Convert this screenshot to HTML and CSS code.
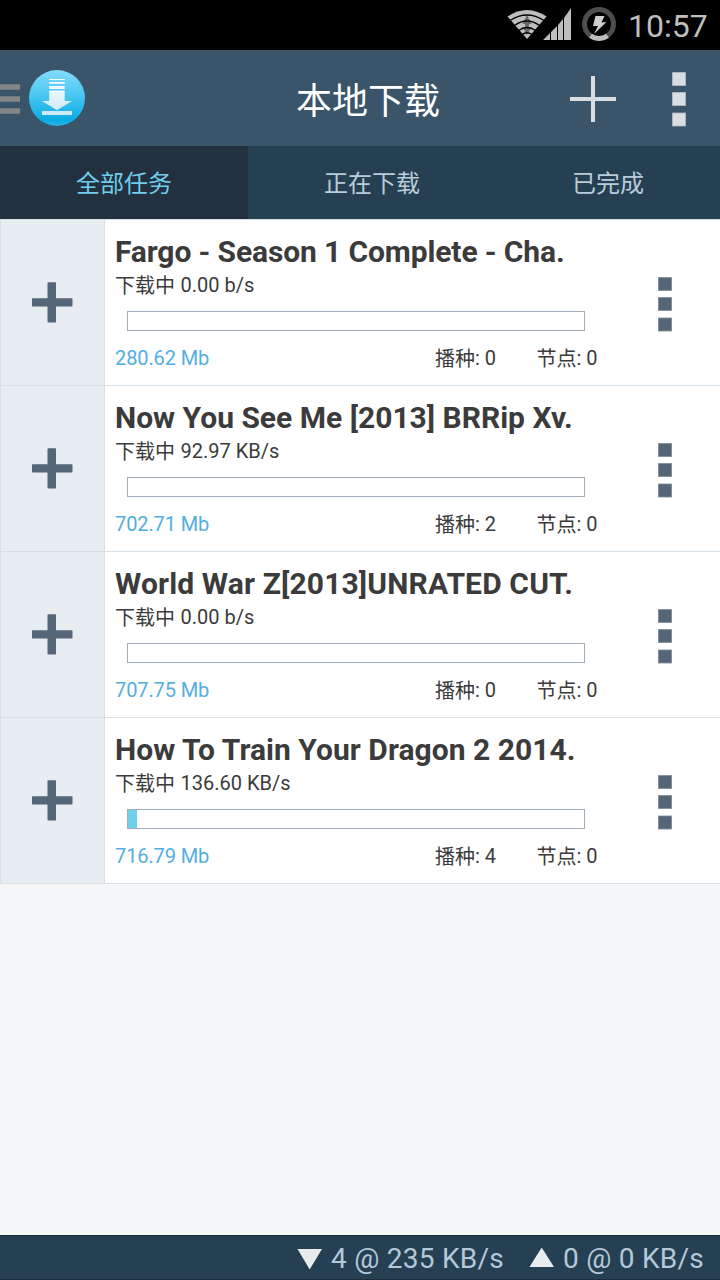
FILE: index.html
```html
<!DOCTYPE html>
<html lang="zh-CN">
<head>
<meta charset="utf-8">
<title>本地下载</title>
<link rel="stylesheet" href="styles.css">
</head>
<body>
<svg width="0" height="0" class="defs" aria-hidden="true">
  <symbol id="plus" viewBox="0 0 42 42"><rect x="16.500" y="1.200" width="8.500" height="40.300" rx=".8" fill="#546677"/><rect x="1" y="17.300" width="40.500" height="8.200" rx=".8" fill="#546677"/></symbol>
  <symbol id="dots" viewBox="0 0 14 56"><path d="M0 0h14v14H0zM0 20h14v14H0zM0 40.500h14v14H0z" fill="currentColor" opacity=".6"/><path d="M.7.700h12.600v12.600H.7zM.7 20.700h12.600v12.600H.7zM.7 41.200h12.600v12.600H.7z" fill="currentColor"/></symbol>
</svg>
<div class="screen">
  <div class="statusbar">
    <svg class="wifi" width="40" height="32" viewBox="0 0 40 32">
      <path d="M.5 8.500Q20-4.500 39.500 8.500L20 31z" fill="#bebebe"/>
      <path d="M20 7l-4.500 9h2.500v3h-2.500l4.500 8 4.500-8h-2.500v-3h2.500z" fill="#666"/>
      <path d="M3 12.500Q20 1.500 37 12.500M7.500 17.500Q20 8.500 32.500 17.500M11.500 22.500Q20 16.500 28.500 22.500M15 26.500Q20 23 25 26.500" fill="none" stroke="#000" stroke-width="1.300"/>
    </svg>
    <svg class="signal" width="28" height="33" viewBox="0 0 28 33">
      <path d="M0 32L7 25V32zM8 24l6-6V32H8zM15 17l5-6V32h-5zM21 10L28 0V32h-7z" fill="#bebebe"/>
    </svg>
    <svg class="battery" width="34" height="34" viewBox="0 0 34 34">
      <circle cx="17" cy="17" r="14.500" fill="none" stroke="#4d4d4d" stroke-width="5"/>
      <path d="M8.500 28.700A14.500 14.500 0 0 0 25.500 28.700" fill="none" stroke="#bebebe" stroke-width="5"/>
      <path d="M13.500 9h9l-3 6.500 5-.500L12 27l4-8h-5z" fill="#cfcfcf"/>
    </svg>
    <span class="clock">10:57</span>
  </div>

  <header class="actionbar">
    <div class="brand">
      <svg width="86" height="58" viewBox="0 0 86 58">
        <defs>
          <linearGradient id="disc" x1="0" y1="0" x2="0" y2="1"><stop offset="0" stop-color="#83dcfb"/><stop offset=".5" stop-color="#43c4f0"/><stop offset=".9" stop-color="#0aace1"/><stop offset="1" stop-color="#29b6e6"/></linearGradient>
          <linearGradient id="arrow" x1="0" y1="0" x2="0" y2="1"><stop offset="0" stop-color="#fff"/><stop offset="1" stop-color="#ceeaf7"/></linearGradient>
        </defs>
        <path d="M0 15.300h20v5.500H0zM0 27.300h20v5.500H0zM0 39.300h20v5.500H0z" fill="#858585"/>
        <circle cx="57" cy="29" r="28" fill="url(#disc)"/>
        <path d="M49.200 10h15.500v1H49.200zM49.200 13h15.500v1.700H49.200zM49.200 17h15.500v3H49.200zM49.200 21.500h15.500V32H72L57 41.300 42 32h7.200z" fill="url(#arrow)"/>
        <path d="M42 42h30v4H42z" fill="#ceeaf7"/>
      </svg>
    </div>
    <h1 class="title">本地下载</h1>
    <div class="actions">
      <svg width="48" height="48" viewBox="0 0 48 48"><path d="M22 1h4v21h21v4H26v21h-4V26H1v-4h21z" fill="#d9dee3"/></svg>
      <svg class="overflow" width="14" height="56"><use href="#dots"/></svg>
    </div>
  </header>

  <nav class="tabs">
    <div class="tab tab-active">全部任务</div>
    <div class="tab">正在下载</div>
    <div class="tab tab-last">已完成</div>
  </nav>

  <main class="list">
    <article class="task">
      <div class="expand"><svg width="42" height="42"><use href="#plus"/></svg></div>
      <div class="info">
        <h2 class="name n1">Fargo - Season 1 Complete - Cha.</h2>
        <p class="state"><span class="cjk">下载中</span> 0.00 b/s</p>
        <div class="bar"></div>
        <div class="meta"><span class="size">280.62 Mb</span><span class="seeds"><span class="cjk">播种</span>: 0</span><span class="peers"><span class="cjk">节点</span>: 0</span></div>
      </div>
      <svg class="more" width="14" height="56"><use href="#dots"/></svg>
    </article>
    <article class="task">
      <div class="expand"><svg width="42" height="42"><use href="#plus"/></svg></div>
      <div class="info">
        <h2 class="name n2">Now You See Me [2013] BRRip Xv.</h2>
        <p class="state"><span class="cjk">下载中</span> 92.97 KB/s</p>
        <div class="bar"></div>
        <div class="meta"><span class="size">702.71 Mb</span><span class="seeds"><span class="cjk">播种</span>: 2</span><span class="peers"><span class="cjk">节点</span>: 0</span></div>
      </div>
      <svg class="more" width="14" height="56"><use href="#dots"/></svg>
    </article>
    <article class="task">
      <div class="expand"><svg width="42" height="42"><use href="#plus"/></svg></div>
      <div class="info">
        <h2 class="name n3">World War Z[2013]UNRATED CUT.</h2>
        <p class="state"><span class="cjk">下载中</span> 0.00 b/s</p>
        <div class="bar"></div>
        <div class="meta"><span class="size">707.75 Mb</span><span class="seeds"><span class="cjk">播种</span>: 0</span><span class="peers"><span class="cjk">节点</span>: 0</span></div>
      </div>
      <svg class="more" width="14" height="56"><use href="#dots"/></svg>
    </article>
    <article class="task">
      <div class="expand"><svg width="42" height="42"><use href="#plus"/></svg></div>
      <div class="info">
        <h2 class="name n4">How To Train Your Dragon 2 2014.</h2>
        <p class="state"><span class="cjk">下载中</span> 136.60 KB/s</p>
        <div class="bar"><div class="fill" style="width:2%"></div></div>
        <div class="meta"><span class="size">716.79 Mb</span><span class="seeds"><span class="cjk">播种</span>: 4</span><span class="peers"><span class="cjk">节点</span>: 0</span></div>
      </div>
      <svg class="more" width="14" height="56"><use href="#dots"/></svg>
    </article>
  </main>

  <footer class="footer">
    <svg width="26" height="22" viewBox="0 0 26 22"><path d="M.5 1h24.500L12.700 21.500z" fill="#e9ecee"/></svg>
    <span class="down">4 @ 235 KB/s</span>
    <svg width="26" height="22" viewBox="0 0 26 22"><path d="M.5 19h24.500L12.700-.5z" fill="#e9ecee"/></svg>
    <span class="up">0 @ 0 KB/s</span>
  </footer>
</div>
</body>
</html>
```
FILE: styles.css
```css
* { box-sizing: border-box; margin: 0; padding: 0; }
body { font-family: Roboto, "Noto Sans CJK SC", sans-serif; background: #f5f7f9; white-space: nowrap; }
svg { display: block; flex: none; }
.defs { position: absolute; }
.screen { width: 720px; height: 1280px; display: flex; flex-direction: column; overflow: hidden; }

.statusbar { height: 50px; flex: none; background: #000; display: flex; align-items: flex-start; }
.wifi { margin: 8px 0 0 507px; }
.signal { margin: 8px 0 0 -4px; }
.battery { margin: 7px 0 0 11px; }
.clock { margin-left: 12px; width: 82px; line-height: 52px; font-size: 32px; color: #bebebe; }

.actionbar { height: 96px; flex: none; background: #3a546a; display: grid; grid-template-columns: 280px 1fr 280px; }
.brand { padding-top: 19px; }
.title { text-align: center; font-size: 36px; font-weight: 400; line-height: 104px; height: 96px; color: #fff; margin-left: 16px; }
.actions { display: flex; color: #d9dee3; padding: 22px 0 0 129px; }
.actions svg:first-child { margin-top: 3px; }
.overflow { margin-left: 55px; }

.tabs { height: 73px; flex: none; display: grid; grid-template-columns: 248px 248px 224px; background: #254053; }
.tab { text-align: center; height: 73px; font-size: 24px; line-height: 77px; color: #b9ccda; }
.tab-active { background: #22303f; color: #6fceec; }

.list { flex: 1; border-top: 1px solid #d5e0e9; }
.task { height: 166px; display: flex; background: #fff; border-bottom: 1px solid #d5e0e9; }
.expand { width: 105px; flex: none; background: #e8edf1; border: solid #d5e0e9; border-width: 0 1px; padding: 61px 0 0 30px; }
.info { width: 552px; flex: none; padding: 14px 0 0 10px; color: #3b3b3b; }
.name { font-size: 30px; line-height: 36px; font-weight: 700; }
.n1 { letter-spacing: -.12px; }
.n3 { letter-spacing: .14px; }
.n4 { letter-spacing: .04px; }
.state { font-size: 20px; line-height: 30px; height: 30px; }
.cjk { font-family: "Noto Sans CJK SC", sans-serif; line-height: 1; position: relative; top: 1px; }
.state .cjk { margin-right: .5px; }
.bar { width: 458px; height: 20px; margin: 11px 0 0 12px; border: 1px solid #a1adb8; }
.fill { height: 100%; background: #6fd0ec; }
.meta { display: flex; margin-top: 12px; font-size: 20px; line-height: 30px; }
.size { width: 320px; color: #53aee2; letter-spacing: -.1px; }
.seeds { width: 101.5px; }
.more { margin: 57px 0 0 1px; color: #546677; }

.footer { height: 45px; flex: none; background: #254053; border: solid #1c2e3c; border-width: 1px 0; display: flex; align-items: flex-start; padding-left: 297px; font-size: 28px; line-height: 46px; letter-spacing: .25px; color: #b3c8d9; }
.footer svg { margin-top: 12px; }
.down { width: 206px; padding-left: 8px; }
.up { padding-left: 8px; }
```
